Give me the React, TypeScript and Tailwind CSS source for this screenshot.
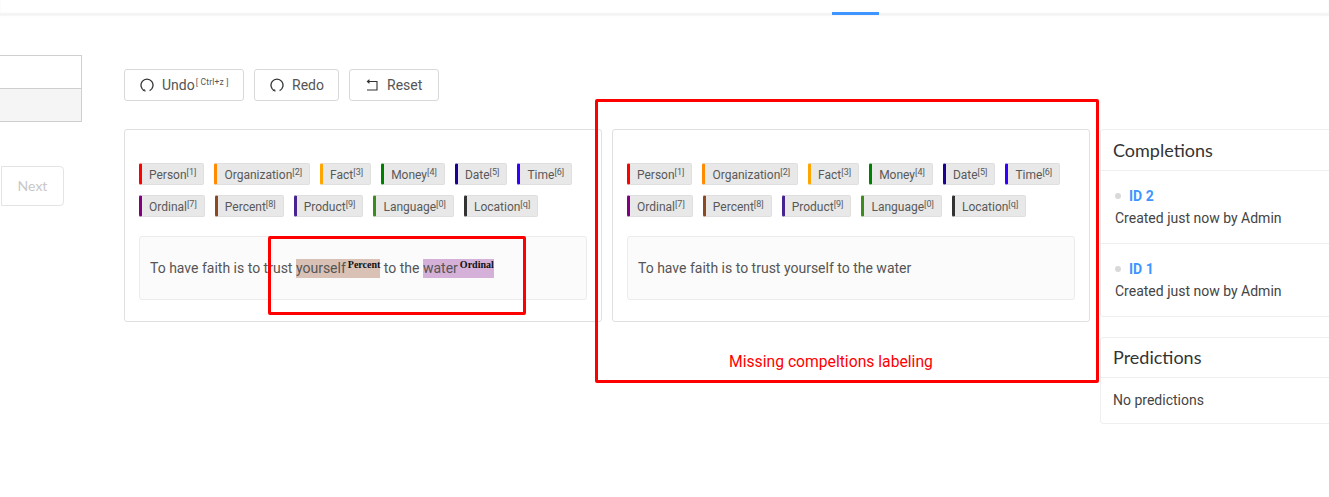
import React from "react";

const sans = "font-['Roboto','Liberation_Sans',sans-serif]";

const rowOne = [
  { name: "Person", key: "1", color: "border-l-[#ff0000]" },
  { name: "Organization", key: "2", color: "border-l-[#ff8c00]" },
  { name: "Fact", key: "3", color: "border-l-[#ffa500]" },
  { name: "Money", key: "4", color: "border-l-[#008000]" },
  { name: "Date", key: "5", color: "border-l-[#1c0090]" },
  { name: "Time", key: "6", color: "border-l-[#3300ff]" },
];

const rowTwo = [
  { name: "Ordinal", key: "7", color: "border-l-[#800080]" },
  { name: "Percent", key: "8", color: "border-l-[#8b4a24]" },
  { name: "Product", key: "9", color: "border-l-[#47248f]" },
  { name: "Language", key: "0", color: "border-l-[#3d8b1e]" },
  { name: "Location", key: "q", color: "border-l-[#333333]" },
];

function ArcIcon() {
  return (
    <svg width="14" height="14" viewBox="0 0 14 14" fill="none" className="text-[#333]">
      <path d="M4.4 12.6A6 6 0 1 1 9.6 12.6" stroke="currentColor" strokeWidth="1.3" />
      <path d="M2.8 12.8L4.8 11.8L5 13.6" stroke="currentColor" strokeWidth="1" />
    </svg>
  );
}

function ResetIcon() {
  return (
    <svg width="14" height="14" viewBox="0 0 14 14" fill="none" className="text-[#333]">
      <path d="M2 12H12V3.5H2.5" stroke="currentColor" strokeWidth="1.1" />
      <path d="M4.5 1.8L2.4 3.5L4.5 5.2" stroke="currentColor" strokeWidth="1.1" />
    </svg>
  );
}

function Tag({ name, hotkey, color }: { name: string; hotkey: string; color: string }) {
  return (
    <div className={`flex h-[22px] items-center rounded-[2px] border border-[#dfdfdf] border-l-[3px] bg-[#e8e8e8] pl-[7px] pr-[7px] pt-[2px] text-[12px] text-[#595959] ${color}`}>
      <span>{name}</span>
      <sup className="-top-[3px] text-[9px]">[{hotkey}]</sup>
    </div>
  );
}

function Labels() {
  return (
    <div className="flex flex-col gap-[10px]">
      <div className="flex gap-[10px]">
        {rowOne.map((t) => (
          <Tag key={t.name} name={t.name} hotkey={t.key} color={t.color} />
        ))}
      </div>
      <div className="flex gap-[10px]">
        {rowTwo.map((t) => (
          <Tag key={t.name} name={t.name} hotkey={t.key} color={t.color} />
        ))}
      </div>
    </div>
  );
}

function Highlight({ text, label, bg }: { text: string; label: string; bg: string }) {
  return (
    <span className={`inline-block h-[19px] leading-[19px] ${bg}`}>
      {text}
      <span className="relative -top-[5px] ml-[2px] font-['Liberation_Serif',serif] text-[10px] font-bold text-[#111]">{label}</span>
    </span>
  );
}

function Card({ children }: { children: React.ReactNode }) {
  return (
    <div className="h-[193px] w-[478px] rounded-[3px] border border-[#e0e0e0] px-[14px] pt-[33px]">
      <Labels />
      <div className="mt-[19px] flex h-[64px] items-center rounded-[3px] border border-[#ececec] bg-[#fbfbfb] px-[10px] text-[14px] text-[#555]">
        <div>{children}</div>
      </div>
    </div>
  );
}

function Completion({ id, last }: { id: string; last?: boolean }) {
  return (
    <div className={`pl-[14px] pt-[16px] ${last ? "h-[72px]" : "h-[73px] border-b border-[#efefef]"}`}>
      <div className="flex items-center">
        <span className="h-[6px] w-[6px] rounded-full bg-[#d9d9d9]" />
        <span className="ml-[8px] text-[14px] font-bold leading-[18px] text-[#3f95ff]">{id}</span>
      </div>
      <div className="mt-[3px] text-[14px] leading-[20px] text-[#444]">Created just now by Admin</div>
    </div>
  );
}

export default function App() {
  return (
    <div className={`relative h-[497px] w-[1329px] overflow-hidden bg-white ${sans}`}>
      <div className="flex h-[15px] items-end pl-[832px] shadow-[inset_0_-2px_2px_rgba(0,0,0,0.05),0_1px_1px_rgba(0,0,0,0.03)]">
        <div className="h-[3px] w-[47px] bg-[#3f95ff]" />
      </div>

      <div className="flex">
        <div className="w-[82px] shrink-0 pt-[40px]">
          <div className="h-[34px] border border-l-0 border-[#cfcfcf]" />
          <div className="h-[33px] border border-l-0 border-t-0 border-[#cfcfcf] bg-[#f5f5f5]" />
          <div className="ml-px mt-[44px] flex h-[40px] w-[63px] items-center justify-center rounded-r-[4px] border border-[#e4e4e4] pb-[2px] font-['Lato',sans-serif] text-[14px] text-[#c8c8c8]">
            Next
          </div>
        </div>

        <div className="ml-[42px] w-[966px] shrink-0 pt-[54px]">
          <div className="flex gap-[10px] text-[14px] text-[#555]">
            <div className="flex h-[32px] w-[120px] items-center rounded-[3px] border border-[#d9d9d9] pl-[15px]">
              <ArcIcon />
              <span className="ml-[8px]">Undo</span>
              <sup className="-top-[3px] ml-[1px] text-[8.5px] tracking-[0.2px]">[ Ctrl+z ]</sup>
            </div>
            <div className="flex h-[32px] w-[85px] items-center rounded-[3px] border border-[#d9d9d9] pl-[15px]">
              <ArcIcon />
              <span className="ml-[8px]">Redo</span>
            </div>
            <div className="flex h-[32px] w-[90px] items-center rounded-[3px] border border-[#d9d9d9] pl-[15px]">
              <ResetIcon />
              <span className="ml-[8px]">Reset</span>
            </div>
          </div>

          <div className="mt-[28px] flex gap-[10px]">
            <Card>
              To have faith is to trust <Highlight text="yourself" label="Percent" bg="bg-[#d9c1b6]" /> to the{" "}
              <Highlight text="water" label="Ordinal" bg="bg-[#d5b0d8]" />
            </Card>
            <Card>To have faith is to trust yourself to the water</Card>
          </div>
        </div>

        <div className="ml-[10px] w-[240px] shrink-0 pt-[114px]">
          <div className="rounded-[3px] border border-[#efefef]">
            <div className="flex h-[41px] items-center border-b border-[#efefef] pl-[12px] font-['Lato',sans-serif] text-[18px] text-[#333]">
              Completions
            </div>
            <Completion id="ID 2" />
            <Completion id="ID 1" last />
          </div>
          <div className="mt-[20px] rounded-[3px] border border-[#efefef]">
            <div className="flex h-[40px] items-center border-b border-[#efefef] pl-[12px] font-['Lato',sans-serif] text-[18px] text-[#333]">
              Predictions
            </div>
            <div className="flex h-[45px] items-center pb-[1px] pl-[12px] text-[14px] text-[#444]">No predictions</div>
          </div>
        </div>
      </div>

      {/* hand-drawn red annotations on top of the screenshot */}
      <div className="absolute left-[268px] top-[236px] h-[79px] w-[258px] rounded-[2px] border-[3px] border-[#ff0000]" />
      <div className="absolute left-[595px] top-[99px] h-[284px] w-[504px] rounded-[2px] border-[3px] border-[#ff0000]" />
      <div className="absolute left-[729px] top-[352px] text-[15.7px] leading-[20px] text-[#ff0000]">Missing compeltions labeling</div>
    </div>
  );
}
